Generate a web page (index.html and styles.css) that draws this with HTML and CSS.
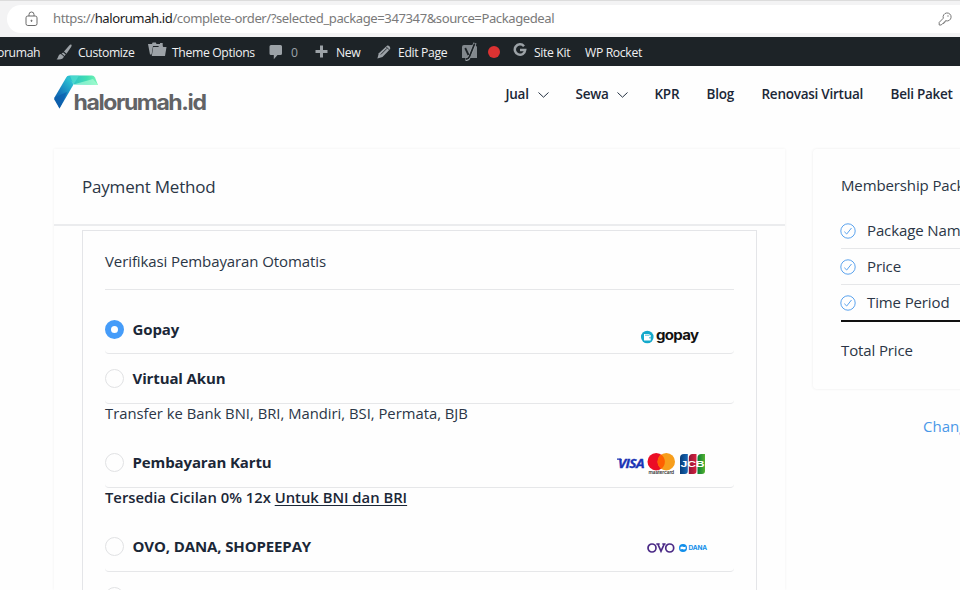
FILE: index.html
```html
<!DOCTYPE html>
<html lang="id">
<head>
  <meta charset="UTF-8">
  <meta name="viewport" content="width=device-width,initial-scale=1.0">
  <title>Complete Order - halorumah.id</title>
  <link rel="stylesheet" href="styles.css">
</head>
<body>
  <div class="browser-bar">
    <div class="address">
      <svg class="lock" width="14" height="16" viewBox="0 0 14 16" fill="none" stroke="#6b6b6b"><rect x="1" y="5" width="11" height="9.5" rx="1.8"/><path d="M4 5V3.500a2.500 2.500 0 0 1 5 0V5"/><circle cx="6.500" cy="9.800" r=".6" fill="#6b6b6b"/></svg>
      <div class="url">https://<b>halorumah.id</b>/complete-order/?selected_package=347347&amp;source=Packagedeal</div>
      <svg class="key" width="14" height="14" viewBox="0 0 14 14" fill="none" stroke="#777"><path d="M5.300 6.200A4 4 0 1 1 8 8.800L7 9v1.300H5.800v1.200H4.600L3.300 13H1.200V10.400z"/><circle cx="10" cy="4" r=".7" fill="#777" stroke="none"/></svg>
    </div>
  </div>

  <div class="admin-bar">
    <span class="ab site">orumah</span>
    <svg class="ab-icon brush" width="18" height="18" viewBox="0 0 18 18" fill="#9ca2a7"><path d="M16.200 1.500c.7.500.5 1.500-.1 2.500L11.500 10.700 9 8.600l5.200-6.200c.7-.8 1.400-1.200 2-.9zM8.200 9.500l2.500 2.100-1.100 1.500-3-2.600zM5.900 11l3 2.600c-.6 2.400-3.200 3.300-7.400 2.700 2.100-1.200 1.400-4.900 4.400-5.300z"/></svg>
    <span class="ab customize">Customize</span>
    <svg class="ab-icon folder" width="19" height="16" viewBox="0 0 19 16" fill="#9ca2a7"><path d="M0 2h4l.6-1.500h3.200L8.500 2H12V1h2.700v3H5L3.600 12.500H2z"/><path d="M5.200 5h5l1-1.300h3.300L15.300 5H18.500L17 14H3.800z"/></svg>
    <span class="ab theme">Theme Options</span>
    <svg class="ab-icon comment" width="14" height="16" viewBox="0 0 14 16" fill="#9ca2a7"><path d="M2 1h9.500a1.500 1.500 0 0 1 1.500 1.500v7a1.500 1.500 0 0 1-1.500 1.500H8.500L4.800 15.200V11H2A1.500 1.500 0 0 1 .5 9.500v-7A1.500 1.500 0 0 1 2 1z"/></svg>
    <span class="ab count">0</span>
    <svg class="ab-icon plus" width="13" height="13" viewBox="0 0 13 13" fill="#9ca2a7"><path d="M5 .5h3V5h4.500v3H8v4.500H5V8H.5V5H5z"/></svg>
    <span class="ab new">New</span>
    <svg class="ab-icon pencil" width="14" height="14" viewBox="0 0 14 14" fill="#9ca2a7"><path d="M10 .7c1.500-.6 3.800 1.500 3.200 3.200L5.500 12 .4 13.400 1.800 8.300z"/><path d="M3.800 9.500l6.200-6.200M9.200 1.800l3 3" stroke="#1d2327" stroke-width=".9"/></svg>
    <span class="ab edit">Edit Page</span>
    <svg class="ab-icon yoast" width="17" height="19" viewBox="0 0 17 19"><path d="M3 3h8.800L7.500 16H1V5a2 2 0 0 1 2-2zM14 3.500a2 2 0 0 1 2 1.500v11H9.500z" fill="#82888d"/><path d="M14 1L8.500 14.500Q7.500 17.500 4.500 17.500" fill="none" stroke="#9ca2a7" stroke-width="3.300"/><path d="M4.200 6l3.300 7M13.700 1.500L8.500 14.500Q7.500 17 5 17.200" fill="none" stroke="#1d2327" stroke-width="1.800"/></svg>
    <span class="dot"></span>
    <svg class="ab-icon google" width="14" height="14" viewBox="0 0 14 14" fill="none" stroke="#9ca2a7" stroke-width="2.500"><path d="M11 3.200A5.200 5.200 0 1 0 12.200 7H7"/></svg>
    <span class="ab sitekit">Site Kit</span>
    <span class="ab rocket">WP Rocket</span>
  </div>

  <header class="header">
    <svg class="logo" width="160" height="40" viewBox="0 0 160 40">
      <defs>
        <linearGradient id="roof" x1="0" x2="1"><stop offset="0" stop-color="#28b9cf"/><stop offset=".65" stop-color="#42dfb1"/><stop offset="1" stop-color="#7df5b8"/></linearGradient>
        <linearGradient id="wall" x1="0" y1="1" x2=".6" y2="0"><stop offset="0" stop-color="#0b4f9c"/><stop offset=".5" stop-color="#1478bd"/><stop offset="1" stop-color="#2bc0d1"/></linearGradient>
      </defs>
      <path d="M14 1.500Q15 .5 17 .5H39Q41 .5 42 2.500L45 10 21 9.500z" fill="url(#roof)"/>
      <path d="M13.500 2Q15 .5 16 1.500L20.500 9.500 6.500 33.500 1.300 24.500Q1 23.500 1.500 22.500z" fill="url(#wall)"/>
      <path d="M1.500 22.500L14 17 6.500 33.500z" fill="#0c5eae" opacity=".65"/>
      <path d="M17 .8H26L20.500 9.500z" fill="#53e0d0" opacity=".7"/>
      <path d="M20.500 9.500L40 4 45 10z" fill="#b8ffdc" opacity=".6"/>
      <text x="20.500" y="34.500" class="logo-text" textLength="132" lengthAdjust="spacingAndGlyphs">halorumah.id</text>
    </svg>
    <nav class="menu">
      <a class="jual">Jual <svg class="caret" width="11" height="6" viewBox="0 0 11 6" fill="none" stroke="#253142"><path d="M.5.500L5.500 5.200 10.500.5"/></svg></a>
      <a class="sewa">Sewa <svg class="caret" width="11" height="6" viewBox="0 0 11 6" fill="none" stroke="#253142"><path d="M.5.500L5.500 5.200 10.500.5"/></svg></a>
      <a class="kpr">KPR</a>
      <a class="blog">Blog</a>
      <a class="renov">Renovasi Virtual</a>
      <a class="paket">Beli Paket</a>
    </nav>
  </header>

  <main class="container">
    <section class="payment">
      <h2>Payment Method</h2>
      <div class="methods">
        <h3>Verifikasi Pembayaran Otomatis</h3>
        <div class="option first">
          <span class="radio checked"></span><label>Gopay</label>
          <svg class="brand gopay" width="62" height="18" viewBox="0 0 62 18"><circle cx="7.300" cy="9" r="6.300" fill="#14a9cb"/><path d="M4 6h5.500v1h1.200v5.500H4z" fill="#fff"/><path d="M5 7.200h4.500M9 9.800h2" stroke="#14a9cb" stroke-width=".8"/><text x="16" y="12" class="gopay-text" textLength="42.500" lengthAdjust="spacingAndGlyphs">gopay</text></svg>
        </div>
        <div class="option">
          <span class="radio"></span><label>Virtual Akun</label>
        </div>
        <div class="note">Transfer ke Bank BNI, BRI, Mandiri, BSI, Permata, BJB</div>
        <div class="option">
          <span class="radio"></span><label>Pembayaran Kartu</label>
          <svg class="brand cards" width="90" height="24" viewBox="0 0 90 24">
            <defs>
              <linearGradient id="jb"><stop stop-color="#063b78"/><stop offset="1" stop-color="#1868b5"/></linearGradient>
              <linearGradient id="jr"><stop stop-color="#8e1838"/><stop offset="1" stop-color="#d8203e"/></linearGradient>
              <linearGradient id="jg"><stop stop-color="#087b37"/><stop offset="1" stop-color="#55b330"/></linearGradient>
            </defs>
            <path d="M2 7.200h3.500l1 1.200" fill="none" stroke="#1a34b5" stroke-width="1.200"/>
            <text x="3" y="16" class="visa" textLength="26" lengthAdjust="spacingAndGlyphs">VISA</text>
            <circle cx="41.200" cy="9.700" r="8.700" fill="#eb0d25"/><circle cx="51.300" cy="9.700" r="8.700" fill="#f79e1b"/>
            <path d="M46.200 2.600a8.700 8.700 0 0 1 0 14.200 8.700 8.700 0 0 1 0-14.200z" fill="#ff5f00"/>
            <text x="33.500" y="22.300" class="mastercard" textLength="25.500" lengthAdjust="spacingAndGlyphs">mastercard</text>
            <path d="M69 2h3.800v17a3 3 0 0 1-3 3H65V6a4 4 0 0 1 4-4z" fill="url(#jb)"/>
            <path d="M77.500 2h4v17a3 3 0 0 1-3 3h-4.700V6a4 4 0 0 1 3.700-4z" fill="url(#jr)"/>
            <path d="M86.500 2H90v17a3 3 0 0 1-3 3h-4.500V6a4 4 0 0 1 4-4z" fill="url(#jg)"/>
            <text x="65.500" y="15.300" class="jcb" textLength="24" lengthAdjust="spacingAndGlyphs">JCB</text>
          </svg>
        </div>
        <div class="note strong">Tersedia Cicilan 0% 12x <u>Untuk BNI dan BRI</u></div>
        <div class="option">
          <span class="radio"></span><label>OVO, DANA, SHOPEEPAY</label>
          <svg class="brand ovo" width="62" height="14" viewBox="0 0 62 14"><g fill="none" stroke="#4b2a86" stroke-width="1.700"><circle cx="6" cy="7" r="4"/><circle cx="23.700" cy="7" r="4"/><path d="M10.300 3h3.400M16.300 3h3.300M11.800 3L15 10.200 18.300 3"/></g><circle cx="37" cy="7" r="4" fill="#118eea"/><path d="M34.500 6q1.300-1 2.600-.3t2.500-.3v2.700q-1.200.8-2.500.2t-2.600.3z" fill="#fff"/><text x="42.500" y="9" class="dana" textLength="18.500" lengthAdjust="spacingAndGlyphs">DANA</text></svg>
        </div>
        <div class="option last">
          <span class="radio"></span>
        </div>
      </div>
    </section>

    <aside class="side">
      <div class="package">
        <h4>Membership Package</h4>
        <ul>
          <li><svg class="check" width="16" height="16" viewBox="0 0 16 16" fill="none" stroke="#5ba3ee"><circle cx="8" cy="8" r="7.200"/><path d="M4.300 8.700L6.700 11 11.500 5"/></svg><span>Package Name</span></li>
          <li><svg class="check" width="16" height="16" viewBox="0 0 16 16" fill="none" stroke="#5ba3ee"><circle cx="8" cy="8" r="7.200"/><path d="M4.300 8.700L6.700 11 11.500 5"/></svg><span>Price</span></li>
          <li><svg class="check" width="16" height="16" viewBox="0 0 16 16" fill="none" stroke="#5ba3ee"><circle cx="8" cy="8" r="7.200"/><path d="M4.300 8.700L6.700 11 11.500 5"/></svg><span>Time Period</span></li>
        </ul>
        <div class="total">Total Price</div>
      </div>
      <a class="change">Change Package</a>
    </aside>
  </main>
</body>
</html>
```
FILE: styles.css
```css
:root {
  --text: #2b3646;
  --dark: #1b2737;
  --line: #e6e7e9;
  --blue: #459cf9;
}
* { box-sizing: border-box; }
html, body {
  margin: 0;
  height: 590px;
  overflow: hidden;
  background: #fefefe;
  color: var(--text);
  font-family: "Open Sans", "Noto Sans", sans-serif;
  white-space: nowrap;
}
svg { display: block; flex-shrink: 0; }
h2, h3, h4, ul { margin: 0; padding: 0; font-weight: 400; }

/* browser */
.browser-bar {
  height: 37px;
  padding: 4px 0 4px 7px;
  background: #f3f3f4;
  border-top: 1px solid #dcdcdc;
}
.address {
  display: flex;
  align-items: center;
  height: 28px;
  padding: 0 8px 0 18px;
  background: #fff;
  border-radius: 14px 0 0 14px;
}
.url {
  margin-left: 14px;
  margin-top: -2px;
  width: 510px;
  font: 13.1px "Noto Sans", sans-serif;
  letter-spacing: -.43px;
  color: #7a7a7a;
}
.url b { font-weight: 400; color: #1c1c1c; }
.key { margin-left: auto; }

/* wp admin bar */
.admin-bar {
  display: flex;
  align-items: center;
  height: 29px;
  background: #1d2327;
  color: #f0f0f1;
  font-size: 12.2px;
  letter-spacing: -.35px;
}
.ab { flex-shrink: 0; padding-top: 1px; }
.site { width: 58px; margin-left: -3px; }
.customize { width: 70px; margin-left: 5px; }
.theme { width: 98px; margin-left: 5px; }
.folder { margin-top: -3px; }
.comment { margin-left: -1px; }
.count { width: 24px; margin-left: 8px; color: #9ca2a7; }
.new { width: 41px; margin-left: 8px; }
.edit { width: 64px; margin-left: 7px; }
.yoast { margin-left: -1px; }
.dot { width: 12px; height: 12px; margin: 0 14px 0 10px; border-radius: 50%; background: #dc3232; }
.google { margin: -3px 0 0 -1px; }
.sitekit { width: 51px; margin-left: 7px; }

/* header */
.header {
  display: flex;
  height: 83px;
  padding: 9px 0 0 53px;
}
.logo-text { font: 700 21px Inter, sans-serif; letter-spacing: -1.3px; fill: #626366; }
.menu {
  display: flex;
  align-items: center;
  height: 37px;
  margin-left: 292.5px;
  font-size: 13.5px;
  font-weight: 600;
  letter-spacing: -.25px;
  color: var(--dark);
}
.menu a { display: flex; align-items: center; flex-shrink: 0; }
.caret { margin: 3px 0 0 auto; }
.jual { width: 43px; margin-right: 27px; }
.sewa { width: 52px; margin-right: 27px; }
.kpr { width: 52px; }
.blog { width: 55px; }
.renov { width: 129px; }

/* content */
.container {
  display: flex;
  align-items: flex-start;
  gap: 28px;
  padding-left: 54px;
}
.payment {
  width: 731px;
  height: 441px;
  flex-shrink: 0;
  box-shadow: 0 0 3px rgba(0,0,0,.06);
}
.payment h2 {
  height: 77px;
  padding-left: 28px;
  line-height: 75px;
  font-size: 17px;
  letter-spacing: -.2px;
  border-bottom: 2px solid #ebecee;
}
.methods {
  width: 675px;
  height: 360px;
  margin: 4px 0 0 28px;
  padding: 0 22px;
  border: 1px solid #e4e5e8;
  border-bottom: 0;
  overflow: hidden;
}
.methods h3 {
  height: 59px;
  line-height: 61px;
  margin-bottom: 14px;
  font-size: 15px;
  letter-spacing: -.1px;
  border-bottom: 1px solid var(--line);
}
.option {
  display: flex;
  align-items: center;
  height: 50px;
  border-bottom: 1px solid var(--line);
  border-radius: 4px;
  font-size: 15px;
  font-weight: 700;
  letter-spacing: -.12px;
  color: var(--dark);
}
.option.first { padding-top: 2px; }
.option label { padding-bottom: 2px; }
.radio {
  width: 19px;
  height: 19px;
  margin-right: 8.5px;
  border: 1px solid #e1e2e4;
  border-radius: 50%;
}
.radio.checked { border: 6.5px solid var(--blue); background: #fff; }
.note { height: 34px; line-height: 18px; font-size: 14.8px; }
.note.strong { font-weight: 600; color: var(--dark); }
.note u { text-underline-offset: 2px; }
.brand { margin-left: auto; }
.gopay { margin: 15px 32px 0 auto; }
.cards { margin: 3px 29px 0 auto; }
.ovo { margin: 3px 26px 0 auto; }
.gopay-text { font: 700 13.5px Inter, sans-serif; letter-spacing: -.6px; fill: #111; }
.visa { font: italic 700 11.5px "Open Sans", sans-serif; letter-spacing: -.5px; fill: #1a34b5; stroke: #1a34b5; stroke-width: .3px; }
.mastercard { font: 600 4.5px Inter, sans-serif; fill: #333; }
.jcb { font: 700 9.5px "Liberation Sans", sans-serif; fill: #fff; }
.dana { font: 700 5.5px Inter, sans-serif; fill: #118eea; }

/* sidebar */
.side { width: 147px; flex-shrink: 0; }
.package {
  width: 300px;
  height: 240px;
  padding-left: 28px;
  border-radius: 4px;
  box-shadow: 0 0 3px rgba(0,0,0,.08);
  font-size: 15px;
  letter-spacing: -.12px;
}
.package h4 { height: 64px; line-height: 73px; font-size: 15px; }
.package li {
  display: flex;
  align-items: center;
  height: 36px;
  border-bottom: 1px solid var(--line);
}
.package li span { padding-bottom: 2px; }
.package li:last-child { height: 37px; border-bottom: 2px solid #111; }
.check { margin: 0 11px 0 -1px; }
.total { line-height: 57px; }
.change { display: block; margin: 26px 0 0 110px; line-height: 22px; font-size: 15px; color: #4a98e8; }
```
